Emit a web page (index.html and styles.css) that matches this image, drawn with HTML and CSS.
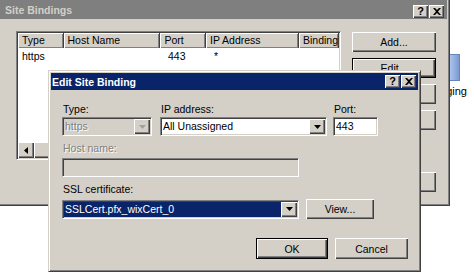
FILE: index.html
```html
<!DOCTYPE html>
<html>
<head>
  <title>Site Bindings</title>
  <link rel="stylesheet" href="styles.css">
</head>
<body>

<div class="desktop-item">
  <div class="desktop-icon"></div>
  <div class="desktop-label">Messaging</div>
</div>

<div class="window bindings">
  <div class="titlebar inactive">
    <span class="title">Site Bindings</span>
    <span class="tbtn help">?</span>
    <span class="tbtn close"><svg width="8" height="7" viewBox="0 0 8 7"><path d="M0 0L2 0L4 2L6 0L8 0L5 3.5L8 7L6 7L4 5L2 7L0 7L3 3.5Z" fill="#000"/></svg></span>
  </div>
  <div class="bindings-body">
    <div class="listview">
      <div class="lv-header">
        <div class="col c-type">Type</div>
        <div class="col c-host">Host Name</div>
        <div class="col c-port">Port</div>
        <div class="col c-ip">IP Address</div>
        <div class="col c-bind">Binding</div>
      </div>
      <div class="lv-row">
        <div class="col c-type">https</div>
        <div class="col c-host"></div>
        <div class="col c-port">443</div>
        <div class="col c-ip">*</div>
        <div class="col c-bind"></div>
      </div>
      <div class="lv-fill"></div>
      <div class="hscroll">
        <span class="sb-btn"><svg width="4" height="7" viewBox="0 0 4 7"><path d="M4 0L4 7L0 3.5Z" fill="#000"/></svg></span>
        <span class="sb-thumb"></span>
      </div>
    </div>
    <div class="side-buttons">
      <button class="btn">Add...</button>
      <button class="btn default">Edit...</button>
      <button class="btn">Remove</button>
      <button class="btn">Browse</button>
      <button class="btn close-btn">Close</button>
    </div>
  </div>
</div>

<div class="window dialog">
  <div class="titlebar active">
    <span class="title">Edit Site Binding</span>
    <span class="tbtn help">?</span>
    <span class="tbtn close"><svg width="8" height="7" viewBox="0 0 8 7"><path d="M0 0L2 0L4 2L6 0L8 0L5 3.5L8 7L6 7L4 5L2 7L0 7L3 3.5Z" fill="#000"/></svg></span>
  </div>
  <div class="dialog-body">
    <div class="field-row">
      <div class="field f-type">
        <label class="lbl">Type:</label>
        <div class="combo disabled">
          <span class="combo-text">https</span>
          <span class="combo-btn"><svg width="7" height="4" viewBox="0 0 7 4"><path d="M0 0L7 0L3.5 4Z" fill="#a0a0a0"/></svg></span>
        </div>
      </div>
      <div class="field f-ip">
        <label class="lbl">IP address:</label>
        <div class="combo">
          <span class="combo-text">All Unassigned</span>
          <span class="combo-btn"><svg width="7" height="4" viewBox="0 0 7 4"><path d="M0 0L7 0L3.5 4Z" fill="#000"/></svg></span>
        </div>
      </div>
      <div class="field f-port">
        <label class="lbl">Port:</label>
        <div class="textbox">443</div>
      </div>
    </div>

    <label class="lbl disabled host-lbl">Host name:</label>
    <div class="textbox disabled host-box"></div>

    <label class="lbl ssl-lbl">SSL certificate:</label>
    <div class="ssl-row">
      <div class="combo ssl-combo">
        <span class="combo-text selected">SSLCert.pfx_wixCert_0</span>
        <span class="combo-btn"><svg width="7" height="4" viewBox="0 0 7 4"><path d="M0 0L7 0L3.5 4Z" fill="#000"/></svg></span>
      </div>
      <button class="btn view-btn">View...</button>
    </div>

    <div class="actions">
      <button class="btn default ok-btn">OK</button>
      <button class="btn cancel-btn">Cancel</button>
    </div>
  </div>
</div>

</body>
</html>
```

FILE: styles.css
```css
* {
  box-sizing: border-box;
}
body {
  margin: 0;
  width: 474px;
  height: 278px;
  overflow: hidden;
  position: relative;
  background: #fff;
  font-family: "Liberation Sans", Tahoma, sans-serif;
  font-size: 10.5px;
  color: #000;
}

/* desktop behind the windows */
.desktop-item {
  position: absolute;
  left: 400px;
  top: 54px;
  width: 67px;
}
.desktop-icon {
  margin-left: 36px;
  width: 24px;
  height: 27px;
  background: linear-gradient(90deg, #5d7fc0, #a9c3ec 60%, #7c9bd2);
  border: 1px solid #6784bd;
}
.desktop-label {
  margin-top: 4px;
  text-align: right;
  line-height: 13px;
  font-size: 11px;
}

/* classic window frame */
.window {
  position: absolute;
  display: flex;
  flex-direction: column;
  background: #d4d0c8;
  border: 1px solid;
  border-color: #d4d0c8 #404040 #404040 #d4d0c8;
  box-shadow: inset 1px 1px #fff, inset -1px -1px #808080;
  padding: 2px;
}
.bindings {
  left: -8px;
  top: -3px;
  width: 458px;
  height: 209px;
}
.dialog {
  left: 48px;
  top: 70px;
  width: 373px;
  height: 202px;
}

.titlebar {
  display: flex;
  align-items: center;
  gap: 1px;
  padding: 0 2px 0 3px;
  font-weight: bold;
  font-size: 10.5px;
  flex-shrink: 0;
}
.titlebar.inactive {
  height: 19px;
  background: #7f7f7f;
  color: #d4d0c8;
  padding-right: 3px;
  padding-left: 10px;
}
.titlebar.active {
  height: 17px;
  background: #0a246a;
  color: #fff;
  padding-left: 1px;
}
.title {
  flex: 1;
  padding-top: 1px;
}
.tbtn {
  width: 15px;
  height: 13px;
  display: flex;
  align-items: center;
  justify-content: center;
  background: #d4d0c8;
  color: #000;
  font-size: 11px;
  line-height: 11px;
  box-shadow: inset 1px 1px #fff, inset -1px -1px #404040, inset -2px -2px #808080;
}
.inactive .tbtn {
  margin-top: 4px;
}

/* buttons */
.btn {
  font: inherit;
  color: #000;
  background: #d4d0c8;
  border: 0;
  padding: 0;
  height: 20px;
  box-shadow: inset 1px 1px #fff, inset -1px -1px #404040, inset -2px -2px #808080;
}
.btn.default {
  border: 1px solid #000;
}

/* Site Bindings window */
.bindings-body {
  display: flex;
  gap: 11px;
  padding: 12px 0 0 21px;
}
.listview {
  width: 325px;
  height: 129px;
  display: flex;
  flex-direction: column;
  background: #fff;
  border: 1px solid;
  border-color: #808080 #fff #fff #808080;
  box-shadow: inset 1px 1px #404040, inset -1px -1px #d4d0c8;
  padding: 1px;
  overflow: hidden;
}
.lv-header,
.lv-row {
  display: flex;
  flex-shrink: 0;
}
.lv-header {
  height: 15px;
  background: #d4d0c8;
}
.lv-header .col {
  line-height: 15px;
  padding-left: 4px;
  box-shadow: inset 1px 1px #fff, inset -1px -1px #808080;
  border-right: 1px solid #404040;
}
.lv-row {
  height: 16px;
}
.lv-row .col {
  line-height: 17px;
  padding-left: 6px;
}
.lv-row .c-type {
  padding-left: 4px;
}
.c-type { width: 46px; }
.c-host { width: 98px; }
.c-port { width: 46px; }
.c-ip { width: 94px; }
.c-bind { flex: 1; }
.lv-fill {
  flex: 1;
}
.hscroll {
  height: 16px;
  display: flex;
  flex-shrink: 0;
  background: #e9e7e2;
}
.sb-btn {
  width: 16px;
  display: flex;
  align-items: center;
  justify-content: center;
  background: #d4d0c8;
  box-shadow: inset 1px 1px #fff, inset -1px -1px #404040, inset -2px -2px #808080;
}
.sb-thumb {
  width: 200px;
  background: #d4d0c8;
  box-shadow: inset 1px 1px #fff, inset -1px -1px #404040, inset -2px -2px #808080;
}
.side-buttons {
  display: flex;
  flex-direction: column;
  gap: 6px;
  width: 84px;
  padding-top: 1px;
}
.close-btn {
  margin-top: 36px;
}

/* Edit Site Binding dialog */
.dialog-body {
  display: flex;
  flex-direction: column;
  align-items: flex-start;
  padding: 13px 10px 0 11px;
}
.lbl {
  display: block;
  line-height: 13px;
  padding-left: 1px;
}
.lbl.disabled {
  color: #808080;
  text-shadow: 1px 1px #fff;
}
.field-row {
  display: flex;
  gap: 8px;
}
.f-port {
  margin-left: -2px;
}
.field .lbl {
  margin-bottom: 1px;
}
.f-type { width: 90px; }
.f-ip { width: 167px; }
.f-port { width: 45px; }

.combo,
.textbox {
  height: 19px;
  display: flex;
  align-items: center;
  background: #fff;
  border: 1px solid;
  border-color: #808080 #fff #fff #808080;
  box-shadow: inset 1px 1px #404040, inset -1px -1px #d4d0c8;
  padding: 1px;
  line-height: 13px;
}
.textbox {
  padding-left: 2px;
}
.combo.disabled,
.textbox.disabled {
  background: #d4d0c8;
}
.combo.disabled .combo-text {
  color: #808080;
  text-shadow: 1px 1px #fff;
}
.combo-text {
  flex: 1;
  height: 15px;
  line-height: 14px;
  padding-left: 1px;
  white-space: nowrap;
  overflow: hidden;
}
.combo-text.selected {
  background: #0a246a;
  color: #fff;
}
.combo-btn {
  width: 16px;
  height: 15px;
  display: flex;
  align-items: center;
  justify-content: center;
  background: #d4d0c8;
  box-shadow: inset 1px 1px #fff, inset -1px -1px #404040, inset -2px -2px #808080;
}
.host-lbl {
  margin-top: 6px;
}
.host-box {
  margin-top: 3px;
  width: 237px;
}
.ssl-lbl {
  margin-top: 6px;
}
.ssl-row {
  display: flex;
  align-items: center;
  gap: 7px;
  margin-top: 3px;
}
.ssl-combo {
  width: 237px;
}
.view-btn {
  width: 68px;
}
.actions {
  display: flex;
  gap: 7px;
  align-self: flex-end;
  margin-top: 19px;
}
.ok-btn {
  width: 72px;
  height: 21px;
}
.cancel-btn {
  width: 73px;
  height: 21px;
}
```
